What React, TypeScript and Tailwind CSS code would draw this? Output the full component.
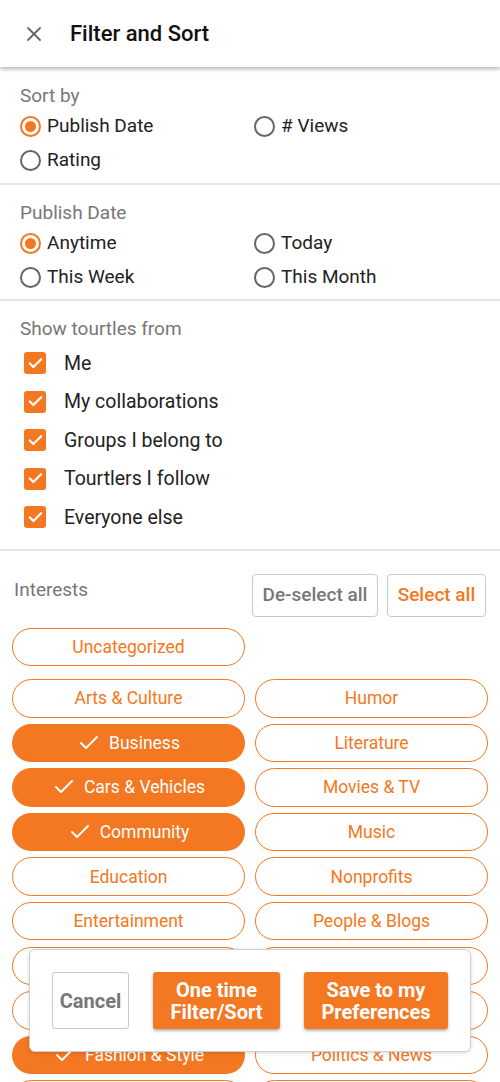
import { X, Check } from "lucide-react";

const ORANGE = "#f47721";

const interests: { name: string; on: boolean }[][] = [
  [{ name: "Arts & Culture", on: false }, { name: "Humor", on: false }],
  [{ name: "Business", on: true }, { name: "Literature", on: false }],
  [{ name: "Cars & Vehicles", on: true }, { name: "Movies & TV", on: false }],
  [{ name: "Community", on: true }, { name: "Music", on: false }],
  [{ name: "Education", on: false }, { name: "Nonprofits", on: false }],
  [{ name: "Entertainment", on: false }, { name: "People & Blogs", on: false }],
  [{ name: "Environment", on: false }, { name: "Pets & Animals", on: false }],
  [{ name: "Family", on: false }, { name: "Photography", on: false }],
  [{ name: "Fashion & Style", on: true }, { name: "Politics & News", on: false }],
  [{ name: "Food & Drink", on: false }, { name: "Science & Tech", on: false }],
];

function Radio({ label, checked }: { label: string; checked?: boolean }) {
  return (
    <div className="flex items-center h-[34px]">
      <div
        className={`w-[21px] h-[21px] rounded-full border-2 flex items-center justify-center ${
          checked ? "border-[#f47721]" : "border-[#666]"
        }`}
      >
        {checked && <div className="w-[11px] h-[11px] rounded-full bg-[#f47721]" />}
      </div>
      <span className="ml-[6px] text-[19px] text-[#222]">{label}</span>
    </div>
  );
}

function CheckRow({ label }: { label: string }) {
  return (
    <div className="flex items-center h-[38.5px]">
      <div className="ml-[24px] w-[22px] h-[22px] rounded-[3px] bg-[#f47721] flex items-center justify-center">
        <Check size={17} strokeWidth={3.2} color="white" />
      </div>
      <span className="ml-[18px] text-[19.5px] text-[#222]">{label}</span>
    </div>
  );
}

function Chip({ name, on }: { name: string; on: boolean }) {
  if (on) {
    return (
      <div className="h-[38.5px] rounded-full bg-[#f47721] flex items-center justify-center text-white text-[17.5px]">
        <Check size={24} strokeWidth={2} className="mr-[8px]" />
        {name}
      </div>
    );
  }
  return (
    <div className="h-[38.5px] rounded-full border-[1.5px] border-[#f47721] flex items-center justify-center text-[#f47721] text-[17.5px]">
      {name}
    </div>
  );
}

export default function App() {
  return (
    <div
      className="relative w-[500px] h-[1082px] overflow-hidden bg-white flex flex-col"
      style={{ fontFamily: "Roboto, 'Noto Sans', sans-serif" }}
    >
      <div className="h-[67px] shrink-0 flex items-center shadow-[0_2px_4px_rgba(0,0,0,0.3)] z-10 bg-white">
        <X size={24} strokeWidth={1.8} color="#666" className="ml-[22px]" />
        <span className="ml-[24px] text-[22px] font-medium text-[#111]">Filter and Sort</span>
      </div>

      <div className="flex-1 overflow-hidden">
        <div className="px-[20px] pt-[16px] pb-[6px] border-b-2 border-[#e6e6e6]">
          <div className="text-[19px] text-[#777] h-[26px] leading-[26px]">Sort by</div>
          <div className="grid grid-cols-[234px_1fr]">
            <Radio label="Publish Date" checked />
            <Radio label="# Views" />
            <Radio label="Rating" />
          </div>
        </div>

        <div className="px-[20px] pt-[15px] pb-[5px] border-b-2 border-[#e6e6e6]">
          <div className="text-[19px] text-[#777] h-[26px] leading-[26px]">Publish Date</div>
          <div className="grid grid-cols-[234px_1fr]">
            <Radio label="Anytime" checked />
            <Radio label="Today" />
            <Radio label="This Week" />
            <Radio label="This Month" />
          </div>
        </div>

        <div className="pt-[15px] pb-[12px] border-b-2 border-[#e6e6e6]">
          <div className="px-[20px] text-[19px] text-[#777] h-[26px] leading-[26px]">Show tourtles from</div>
          <div className="pt-[2px]">
            <CheckRow label="Me" />
            <CheckRow label="My collaborations" />
            <CheckRow label="Groups I belong to" />
            <CheckRow label="Tourtlers I follow" />
            <CheckRow label="Everyone else" />
          </div>
        </div>

        <div className="px-[12px] pt-[23px]">
          <div className="flex items-start">
            <div className="ml-[2px] mt-[2px] flex-1 text-[19px] text-[#777]">Interests</div>
            <button className="w-[126px] h-[43px] shrink-0 rounded-[4px] border border-[#c8c8c8] text-[19px] font-medium text-[#777]">
              De-select all
            </button>
            <button className="ml-[9px] mr-[2px] w-[99px] h-[43px] shrink-0 rounded-[4px] border border-[#c8c8c8] text-[19px] font-medium text-[#f47721]">
              Select all
            </button>
          </div>
          <div className="mt-[11px] grid grid-cols-2 gap-x-[10px]">
            <Chip name="Uncategorized" on={false} />
          </div>
          <div className="mt-[13px] grid grid-cols-2 gap-x-[10px] gap-y-[6.1px]">
            {interests.flat().map((c) => (
              <Chip key={c.name} name={c.name} on={c.on} />
            ))}
          </div>
        </div>
      </div>

      <div className="absolute left-[29px] top-[949px] w-[442px] h-[103px] bg-white border border-[#cfcfcf] rounded-[6px] shadow-[0_1px_4px_rgba(0,0,0,0.15)] flex items-start px-[22px] pt-[22px] gap-[24px]">
        <button className="w-[77px] h-[57px] rounded-[3px] border border-[#c8c8c8] text-[20px] font-bold text-[#777]">
          Cancel
        </button>
        <button
          className="w-[127px] h-[57px] rounded-[3px] text-white text-[20px] font-bold leading-[22px] shadow-[0_2px_3px_rgba(0,0,0,0.3)]"
          style={{ backgroundColor: ORANGE }}
        >
          One time
          <br />
          Filter/Sort
        </button>
        <button
          className="w-[144px] h-[57px] rounded-[3px] text-white text-[20px] font-bold leading-[22px] shadow-[0_2px_3px_rgba(0,0,0,0.3)]"
          style={{ backgroundColor: ORANGE }}
        >
          Save to my
          <br />
          Preferences
        </button>
      </div>
    </div>
  );
}
